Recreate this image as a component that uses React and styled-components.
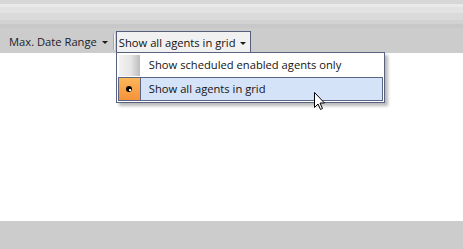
import React from 'react';
import styled, { createGlobalStyle } from 'styled-components';

const GlobalStyle = createGlobalStyle`
  html, body {
    margin: 0;
    padding: 0;
    background: #ffffff;
  }
  body {
    font-family: "Open Sans", "Noto Sans", sans-serif;
  }
`;

const Page = styled.div`
  position: relative;
  display: flex;
  flex-direction: column;
  width: 463px;
  height: 249px;
  overflow: hidden;
`;

const TitleBand = styled.div`
  height: 28px;
  background: linear-gradient(
    to bottom,
    #d7d7d7 0px,
    #d7d7d7 4px,
    #e9e9e9 4px,
    #e9e9e9 7px,
    #e2e2e2 7px,
    #e2e2e2 13px,
    #dadada 13px,
    #dadada 20px,
    #d2d2d2 20px,
    #d2d2d2 24px,
    #c8c8c8 24px,
    #c8c8c8 28px
  );
`;

const Toolbar = styled.div`
  height: 25px;
  background: #cccccc;
  display: flex;
  align-items: flex-start;
  padding-left: 9px;
  font-size: 11.2px;
  color: #1c1c28;
`;

const ToolItem = styled.div`
  display: flex;
  align-items: center;
  height: 22px;
  margin-top: 3px;
  padding-bottom: 2px;
  box-sizing: border-box;
  white-space: nowrap;
`;

const Caret = styled.span`
  display: inline-block;
  width: 0;
  height: 0;
  margin-left: ${(p) => p.gap || 5}px;
  margin-top: 2px;
  border-left: 3px solid transparent;
  border-right: 3px solid transparent;
  border-top: 3px solid #1c1c1c;
`;

const Separator = styled.div`
  width: 1px;
  height: 17px;
  margin: 5px 2px 0 5px;
  background: #a8a8a8;
  box-shadow: 1px 0 0 #f4f4f4;
`;

const DropWrap = styled.div`
  position: relative;
  margin-top: 3px;
`;

const DropButton = styled.div`
  display: flex;
  align-items: center;
  box-sizing: border-box;
  width: 135px;
  height: 23px;
  padding-left: 2px;
  padding-bottom: 2px;
  background: #f1f1f1;
  border: 1px solid #565e7c;
  border-bottom: none;
  white-space: nowrap;
  color: #111111;
`;

const Menu = styled.div`
  position: absolute;
  top: 21px;
  left: 0;
  z-index: 2;
  box-sizing: border-box;
  width: 269px;
  padding: 1px 1px 1px 1px;
  background: #ffffff;
  border: 1px solid #5a6282;
  box-shadow: 3px 3px 3px rgba(0, 0, 0, 0.28);
`;

const MenuItem = styled.div`
  display: flex;
  align-items: stretch;
  height: ${(p) => (p.selected ? 24 : 23)}px;
  box-sizing: border-box;
  border: 1px solid ${(p) => (p.selected ? '#5b6584' : 'transparent')};
  background: ${(p) => (p.selected ? '#d4e3f8' : 'transparent')};
  font-size: 11.2px;
  color: #141414;
  white-space: nowrap;
`;

const IconColumn = styled.div`
  width: 21px;
  flex: none;
  margin-left: ${(p) => (p.selected ? -1 : 0)}px;
  margin-top: ${(p) => (p.selected ? -1 : 0)}px;
  margin-bottom: ${(p) => (p.selected ? -1 : 0)}px;
  display: flex;
  align-items: center;
  justify-content: center;
  background: ${(p) => (p.selected
    ? 'linear-gradient(to bottom, #fdb658, #f6923a)'
    : 'linear-gradient(to right, #f2f2f2 0%, #e6e6e6 55%, #bdbdbd 100%)')};
  border: ${(p) => (p.selected ? '1px solid #5b6584' : 'none')};
`;

const Dot = styled.span`
  width: 6px;
  height: 6px;
  border-radius: 50%;
  background: radial-gradient(circle at 70% 70%, #ffffff 0 1px, #000000 1.5px);
`;

const ItemLabel = styled.span`
  display: flex;
  align-items: center;
  padding-left: ${(p) => (p.selected ? 8 : 9)}px;
  padding-bottom: 2px;
`;

const Content = styled.div`
  flex: 1;
  background: #ffffff;
`;

const Footer = styled.div`
  height: 28px;
  background: #cccccc;
`;

const Cursor = styled.svg`
  position: absolute;
  left: 314px;
  top: 92px;
  z-index: 5;
`;

export default function App() {
  return (
    <Page>
      <GlobalStyle />
      <TitleBand />
      <Toolbar>
        <ToolItem>
          Max. Date Range
          <Caret gap={5} />
        </ToolItem>
        <Separator />
        <DropWrap>
          <DropButton>
            Show all agents in grid
            <Caret gap={5} />
          </DropButton>
          <Menu>
            <MenuItem>
              <IconColumn />
              <ItemLabel>Show scheduled enabled agents only</ItemLabel>
            </MenuItem>
            <MenuItem selected>
              <IconColumn selected>
                <Dot />
              </IconColumn>
              <ItemLabel selected>Show all agents in grid</ItemLabel>
            </MenuItem>
          </Menu>
        </DropWrap>
      </Toolbar>
      <Content />
      <Footer />
      <Cursor width="13" height="19" viewBox="0 0 13 19">
        <path
          d="M0.5 0.5 L0.5 15.5 L4 12 L6.5 17.5 L8.5 16.5 L6 11 L10.5 11 Z"
          fill="#ffffff"
          stroke="#000000"
          strokeWidth="1"
          strokeLinejoin="miter"
        />
      </Cursor>
    </Page>
  );
}
